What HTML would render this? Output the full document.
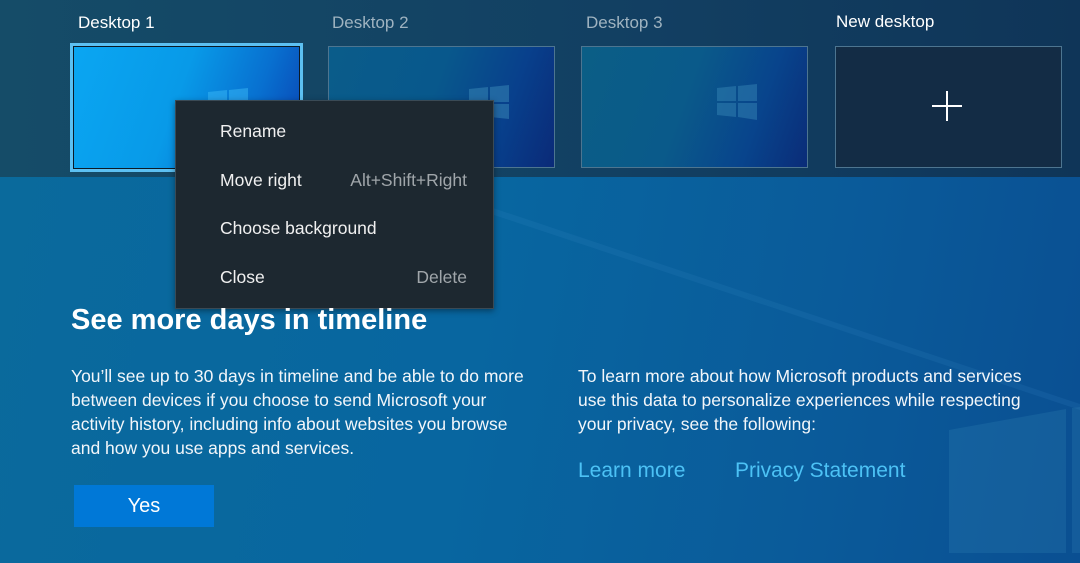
<!DOCTYPE html>
<html><head><meta charset="utf-8"><style>
*{margin:0;padding:0;box-sizing:border-box}
body{width:1080px;height:563px;overflow:hidden;position:relative;font-family:"Liberation Sans",sans-serif;color:#fff;
background:linear-gradient(100deg,#0a6a9c 0%,#0866a0 45%,#0a5b9a 75%,#0a4f92 100%);}
.band{position:absolute;left:0;top:0;width:1080px;height:177px;background:linear-gradient(90deg,#154c68,#123f62 60%,#0f3558);}
.lbl{position:absolute;top:13px;font-size:17px;}
.th{position:absolute;top:46px;width:227px;height:122px;border:1px solid #4d7590;overflow:hidden}
.menu{position:absolute;left:175px;top:100px;width:319px;height:209px;background:#1d2830;border:1px solid #3a4a55;box-shadow:0 2px 6px rgba(0,0,0,.4)}
.mi{position:absolute;left:44px;font-size:17.5px;color:#f0f0f0}
.sc{position:absolute;right:26px;font-size:17.5px;color:#a0a6aa}
p{position:absolute;font-size:17.5px;line-height:24px;color:#f2f6fa;white-space:nowrap}
a{position:absolute;font-size:21px;color:#4cc2f5;text-decoration:none}
</style></head><body>
<svg style="position:absolute;left:0;top:0" width="1080" height="563">
<polygon points="380,177 1080,410 1080,404 400,177" fill="#3a90c8" opacity=".15"/>
<polygon points="949,430 1066,409 1066,553 949,553" fill="#3a8cbc" opacity=".22"/>
<polygon points="1072,408 1080,407 1080,553 1072,553" fill="#3a8cbc" opacity=".22"/>
</svg>
<div class="band"></div>
<div class="lbl" style="left:78px">Desktop 1</div>
<div class="lbl" style="left:332px;color:#9fb3c0">Desktop 2</div>
<div class="lbl" style="left:586px;color:#9fb3c0">Desktop 3</div>
<div class="lbl" style="left:836px;top:12px">New desktop</div>

<div style="position:absolute;left:70px;top:43px;width:233px;height:129px;border:3px solid #5cc0f2;">
 <div style="position:absolute;inset:0;border:1px solid #0b1a25;background:linear-gradient(110deg,#0aa6f2 0%,#089ae8 45%,#0870d0 75%,#0a40b0 100%)"></div>
 <svg style="position:absolute;left:135px;top:42px" width="40" height="34"><path d="M0 4L19 2V17H0ZM21 2L40 0V17H21ZM0 19H19V32L0 30ZM21 19H40V34L21 32Z" fill="#3ab8f5" opacity=".5"/></svg>
</div>
<div class="th" style="left:328px;background:linear-gradient(110deg,#0a5c8a 0%,#08588c 45%,#08408c 75%,#0a2a78 100%)">
 <svg style="position:absolute;left:140px;top:38px" width="40" height="34"><path d="M0 4L19 2V17H0ZM21 2L40 0V17H21ZM0 19H19V32L0 30ZM21 19H40V34L21 32Z" fill="#3a8ab8" opacity=".5"/></svg>
</div>
<div class="th" style="left:581px;background:linear-gradient(110deg,#0b5e86 0%,#0a5a8a 45%,#08448c 75%,#0a2c78 100%)">
 <svg style="position:absolute;left:135px;top:37px" width="40" height="36"><path d="M0 4L19 2V17H0ZM21 2L40 0V17H21ZM0 19H19V33L0 31ZM21 19H40V36L21 33Z" fill="#3a8ab8" opacity=".45"/></svg>
</div>
<div class="th" style="left:835px;background:#132c45">
 <div style="position:absolute;left:96px;top:58px;width:30px;height:2px;background:#fff"></div>
 <div style="position:absolute;left:110px;top:44px;width:2px;height:30px;background:#fff"></div>
</div>

<div class="menu">
 <div class="mi" style="top:20px">Rename</div>
 <div class="mi" style="top:69px">Move right</div><div class="sc" style="top:69px">Alt+Shift+Right</div>
 <div class="mi" style="top:117px">Choose background</div>
 <div class="mi" style="top:166px">Close</div><div class="sc" style="top:166px">Delete</div>
</div>

<div style="position:absolute;left:71px;top:304px;font-size:29px;font-weight:bold">See more days in timeline</div>
<p style="left:71px;top:364px">You’ll see up to 30 days in timeline and be able to do more<br>between devices if you choose to send Microsoft your<br>activity history, including info about websites you browse<br>and how you use apps and services.</p>
<div style="position:absolute;left:74px;top:485px;width:140px;height:42px;background:#0078d7;font-size:20px;text-align:center;line-height:42px">Yes</div>
<p style="left:578px;top:364px">To learn more about how Microsoft products and services<br>use this data to personalize experiences while respecting<br>your privacy, see the following:</p>
<a style="left:578px;top:459px">Learn more</a>
<a style="left:735px;top:459px">Privacy Statement</a>
</body></html>
